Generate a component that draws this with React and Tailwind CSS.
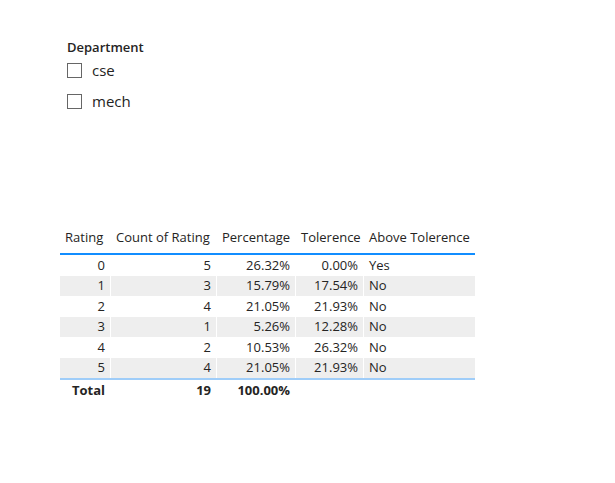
import React from "react";

const rows = [
  ["0", "5", "26.32%", "0.00%", "Yes"],
  ["1", "3", "15.79%", "17.54%", "No"],
  ["2", "4", "21.05%", "21.93%", "No"],
  ["3", "1", "5.26%", "12.28%", "No"],
  ["4", "2", "10.53%", "26.32%", "No"],
  ["5", "4", "21.05%", "21.93%", "No"],
];

const cols = "grid grid-cols-[50px_105px_78px_67px_111px] gap-x-px";

export default function App() {
  return (
    <div className="w-[615px] h-[483px] bg-white text-[#252423] font-['Open_Sans',sans-serif]">
      <div className="pt-[39px] pl-[67px]">
        <div className="text-[13px] leading-[16px] font-semibold">Department</div>
        {["cse", "mech"].map((d) => (
          <div key={d} className="flex items-center h-[31px] gap-[10px]">
            <span className="w-[15px] h-[15px] border border-[#666666] bg-white" />
            <span className="text-[15px] leading-none">{d}</span>
          </div>
        ))}
      </div>

      <div className="ml-[60px] mt-[106px] w-[415px] text-[13px]">
        <div className={`${cols} h-[32px] items-center border-b-2 border-[#118dff]`}>
          {["Rating", "Count of Rating", "Percentage", "Tolerence", "Above Tolerence"].map((h) => (
            <div key={h} className="pl-[5px] whitespace-nowrap">{h}</div>
          ))}
        </div>
        {rows.map((r, i) => (
          <div key={i} className={`${cols} h-[20.5px]`}>
            {r.map((c, j) => (
              <div
                key={j}
                className={`flex items-center h-full px-[5px] ${j === 4 ? "justify-start" : "justify-end"} ${
                  i % 2 === 1 ? "bg-[#eeeeee]" : "bg-white"
                }`}
              >
                {c}
              </div>
            ))}
          </div>
        ))}
        <div className={`${cols} h-[23px] items-center border-t-2 border-[#9fcdf9] font-bold`}>
          <div className="text-right pr-[5px]">Total</div>
          <div className="text-right pr-[5px]">19</div>
          <div className="text-right pr-[5px]">100.00%</div>
          <div />
          <div />
        </div>
      </div>
    </div>
  );
}
